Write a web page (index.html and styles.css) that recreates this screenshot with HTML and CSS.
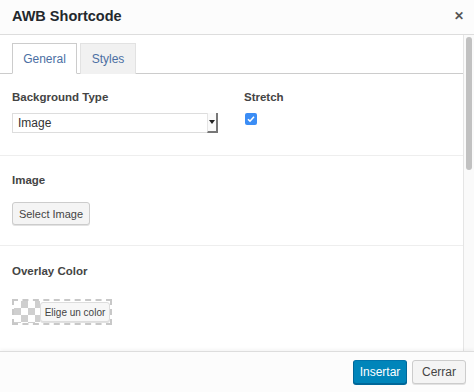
FILE: index.html
```html
<!DOCTYPE html>
<html lang="en">
<head>
  <meta charset="UTF-8" />
  <title>AWB Shortcode</title>
  <link rel="stylesheet" href="styles.css">
</head>
<body>
  <div class="modal">
    <div class="modalHeader">
      <h1>AWB Shortcode</h1>
      <span class="close">&#x2715;</span>
    </div>

    <div class="modalBody">
      <div class="content">
        <div class="tabs">
          <div class="tab active">General</div>
          <div class="tab">Styles</div>
        </div>

        <div class="section first">
          <div class="row">
            <div class="field wide">
              <label>Background Type</label>
              <div class="select">
                <span>Image</span>
                <span class="arrow">
                  <svg width="6" height="4" viewBox="0 0 6 4"><path d="M0 0h6L3 4z" fill="#222"/></svg>
                </span>
              </div>
            </div>
            <div class="field">
              <label>Stretch</label>
              <span class="checkbox">
                <svg width="12" height="12" viewBox="0 0 12 12"><path d="M3 6.2l2 2 4-4.4" fill="none" stroke="#fff" stroke-width="1.6"/></svg>
              </span>
            </div>
          </div>
        </div>

        <div class="section">
          <label>Image</label>
          <button class="btn select-image">Select Image</button>
        </div>

        <div class="section last">
          <label>Overlay Color</label>
          <div class="picker">
            <span class="swatch"></span>
            <button class="btn small">Elige un color</button>
          </div>
        </div>
      </div>
      <div class="scrollbar"><div class="thumb"></div></div>
    </div>

    <div class="modalFooter">
      <button class="btn primary">Insertar</button>
      <button class="btn">Cerrar</button>
    </div>
  </div>
</body>
</html>
```

FILE: styles.css
```css
* {
  margin: 0;
  padding: 0;
  box-sizing: border-box;
  font-family: 'Liberation Sans', Arial, sans-serif;
}

body {
  background: #fff;
}

.modal {
  width: 474px;
  height: 392px;
  display: flex;
  flex-direction: column;
  overflow: hidden;
}

.modalHeader {
  height: 35px;
  flex: none;
  background: #fcfcfc;
  border-bottom: 1px solid #dddddd;
  display: flex;
  align-items: center;
  justify-content: space-between;
  padding: 0 10px 0 12px;
}

.modalHeader h1 {
  font-size: 14.5px;
  font-weight: 700;
  color: #23282d;
  margin-top: -2px;
}

.close {
  font-size: 12px;
  font-weight: 700;
  color: #555;
  margin-top: -2px;
}

.modalBody {
  flex: 1;
  display: flex;
  min-height: 0;
}

.content {
  width: 464px;
  border-right: 1px solid #e5e5e5;
  overflow: hidden;
}

.scrollbar {
  flex: 1;
  padding: 2px 2px 0 2px;
  background: #fafafa;
}

.thumb {
  width: 6px;
  height: 133px;
  border-radius: 3px;
  background: #c1c1c1;
}

.tabs {
  display: flex;
  gap: 3px;
  padding: 8px 0 0 12px;
  border-bottom: 1px solid #cccccc;
}

.tab {
  height: 31px;
  width: 56px;
  display: flex;
  align-items: center;
  justify-content: center;
  font-size: 12px;
  color: #4b6fa3;
  background: #f1f1f1;
  border: 1px solid #e2e2e2;
  border-bottom: none;
  margin-bottom: -1px;
}

.tab.active {
  width: 65px;
  background: #fff;
  border-color: #cccccc;
  border-bottom: 1px solid #fff;
}

.section {
  padding: 17px 12px 20px;
  border-bottom: 1px solid #eeeeee;
}

.section.first {
  padding: 16px 12px 22px;
}

.section.last {
  padding-top: 18px;
  border-bottom: none;
}

.row {
  display: flex;
  gap: 26px;
}

.field.wide {
  width: 206px;
}

label {
  display: block;
  font-size: 11.5px;
  font-weight: 700;
  color: #444;
  line-height: 14px;
  margin-bottom: 15px;
}

.first label {
  margin-bottom: 9px;
}

.select {
  height: 20px;
  border: 1px solid #dddddd;
  display: flex;
  align-items: center;
  justify-content: space-between;
  font-size: 12px;
  color: #333;
  padding-left: 5px;
}

.select .arrow {
  width: 11px;
  height: 20px;
  margin-top: -1px;
  margin-right: -1px;
  border-left: 1px solid #e5e5e5;
  border-right: 2px solid #777;
  border-bottom: 2px solid #777;
  background: #fafafa;
  display: flex;
  align-items: center;
  justify-content: center;
}

.checkbox {
  display: block;
  width: 12px;
  height: 12px;
  margin-left: 1px;
  border-radius: 2px;
  background: #3b8df5;
}

.checkbox svg {
  display: block;
}

.btn {
  height: 23px;
  padding: 0 8px;
  font-size: 11px;
  color: #444;
  background: #f4f4f4;
  border: 1px solid #cccccc;
  border-radius: 3px;
  box-shadow: 0 1px 0 #e2e2e2;
  white-space: nowrap;
}

.select-image {
  width: 78px;
  padding: 0;
}

.picker {
  width: 100px;
  height: 26px;
  margin-top: 21px;
  border: 2px dashed #c8c8c8;
  display: flex;
  align-items: center;
}

.swatch {
  width: 26px;
  height: 22px;
  flex: none;
  background-color: #fff;
  background-image:
    linear-gradient(45deg, #cfcfcf 25%, transparent 25%, transparent 75%, #cfcfcf 75%),
    linear-gradient(45deg, #cfcfcf 25%, transparent 25%, transparent 75%, #cfcfcf 75%);
  background-size: 14px 14px;
  background-position: 0 0, 7px 7px;
}

.btn.small {
  flex: none;
  width: 70px;
  height: 20px;
  font-size: 10px;
  padding: 0;
  background: #f7f7f7;
  border-color: #dddddd;
}

.modalFooter {
  height: 41px;
  flex: none;
  background: #fcfcfc;
  border-top: 1px solid #dddddd;
  box-shadow: 0 -2px 3px rgba(0, 0, 0, 0.04);
  display: flex;
  justify-content: flex-end;
  align-items: center;
  gap: 5px;
  padding: 0 8px 0 0;
}

.modalFooter .btn {
  width: 54px;
  height: 24px;
  font-size: 12px;
  padding: 0;
}

.btn.primary {
  background: #0085ba;
  border-color: #0073aa #006799 #006799;
  color: #fff;
  box-shadow: 0 1px 0 #006799;
}
```
